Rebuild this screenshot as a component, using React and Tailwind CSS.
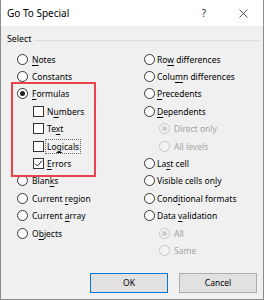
import React from "react";

const FONT = { fontFamily: '"Noto Sans", "Open Sans", sans-serif' };

function Label({ text, u, disabled, focus }) {
  const parts = [];
  if (u == null) parts.push(text);
  else {
    parts.push(text.slice(0, u));
    parts.push(
      <span key="u" className="underline underline-offset-[1.5px] decoration-[0.8px]">
        {text[u]}
      </span>
    );
    parts.push(text.slice(u + 1));
  }
  return (
    <span
      className={`whitespace-nowrap leading-[11px] ${disabled ? "text-[#a3a3a3]" : "text-[#000]"} ${
        focus ? "outline outline-1 outline-dotted outline-[#666] outline-offset-[1px]" : ""
      }`}
    >
      {parts}
    </span>
  );
}

function Radio({ checked, disabled }) {
  return (
    <span
      className={`w-[11px] h-[11px] rounded-full border flex items-center justify-center shrink-0 ${
        disabled ? "border-[#c6c6c6] bg-[#f4f4f4]" : "border-[#333] bg-white"
      }`}
    >
      {checked && (
        <span className={`w-[5px] h-[5px] rounded-full ${disabled ? "bg-[#cccccc]" : "bg-[#222]"}`} />
      )}
    </span>
  );
}

function Check({ checked }) {
  return (
    <span className="w-[11px] h-[11px] border border-[#333] bg-white flex items-center justify-center shrink-0">
      {checked && (
        <svg width="9" height="9" viewBox="0 0 9 9">
          <path d="M1 4.6 L3.4 7 L8 1.8" fill="none" stroke="#222" strokeWidth="1" />
        </svg>
      )}
    </span>
  );
}

function Row({ type = "radio", text, u, checked, disabled, indent = 0, focus, gap = 4 }) {
  return (
    <div className="h-[17.4px] flex items-center" style={{ paddingLeft: indent, gap }}>
      {type === "radio" ? <Radio checked={checked} disabled={disabled} /> : <Check checked={checked} />}
      <Label text={text} u={u} disabled={disabled} focus={focus} />
    </div>
  );
}

export default function App() {
  return (
    <div
      className="w-[264px] h-[300px] bg-[#f0f0f0] border-x border-b border-[#8c8c8c] relative overflow-hidden text-[8.5px] flex flex-col"
      style={FONT}
    >
      <div className="h-[26px] bg-white flex items-center pl-[6px] shrink-0">
        <span className="text-[10px] text-[#000] flex-1">Go To Special</span>
        <span className="text-[10px] text-[#333] mr-[33px]">?</span>
        <svg width="9" height="9" viewBox="0 0 9 9" className="mr-[15px]">
          <path d="M0.5 0.5 L8.5 8.5 M8.5 0.5 L0.5 8.5" stroke="#444" strokeWidth="0.9" />
        </svg>
      </div>
      <div className="flex items-center pl-[6px] pr-[3px] mt-[7px] h-[14px]">
        <span className="text-[8.8px] text-[#000]">Select</span>
        <div className="flex-1 ml-[3px] border-t border-[#dedede]" />
      </div>
      <div className="grid grid-cols-[127px_1fr] mt-[3.5px]">
        <div className="pl-[16px]">
          <Row text="Notes" u={0} />
          <Row text="Constants" u={3} />
          <Row text="Formulas" u={0} checked />
          <Row type="check" text="Numbers" u={1} indent={16} gap={3} />
          <Row type="check" text="Text" u={2} indent={16} gap={3} />
          <Row type="check" text="Logicals" u={2} indent={16} gap={3} focus />
          <Row type="check" text="Errors" u={0} indent={16} gap={3} checked />
          <Row text="Blanks" u={4} />
          <Row text="Current region" u={8} />
          <Row text="Current array" u={8} />
          <Row text="Objects" u={1} />
        </div>
        <div className="pl-[16px]">
          <Row text="Row differences" u={2} gap={2} />
          <Row text="Column differences" u={4} gap={2} />
          <Row text="Precedents" u={0} gap={2} />
          <Row text="Dependents" u={0} gap={2} />
          <Row text="Direct only" disabled checked indent={15} gap={4} />
          <Row text="All levels" disabled indent={15} gap={4} />
          <Row text="Last cell" u={2} gap={2} />
          <Row text="Visible cells only" u={16} gap={2} />
          <Row text="Conditional formats" u={4} gap={2} />
          <Row text="Data validation" u={5} gap={2} />
          <Row text="All" disabled checked indent={15} gap={4} />
          <Row text="Same" disabled indent={15} gap={4} />
        </div>
      </div>
      <div className="flex justify-end gap-[11px] pr-[6px] mt-auto mb-[6px]">
        <button className="w-[78px] h-[20px] bg-[#e1e1e1] border border-[#0078d7] text-[#000] text-[8.5px] leading-none">
          OK
        </button>
        <button className="w-[78px] h-[20px] bg-[#e1e1e1] border border-[#adadad] text-[#000] text-[8.5px] leading-none">
          Cancel
        </button>
      </div>
      <div className="absolute left-[10px] top-[82px] w-[85px] h-[95px] border-2 border-[#e8424c] pointer-events-none" />
    </div>
  );
}
